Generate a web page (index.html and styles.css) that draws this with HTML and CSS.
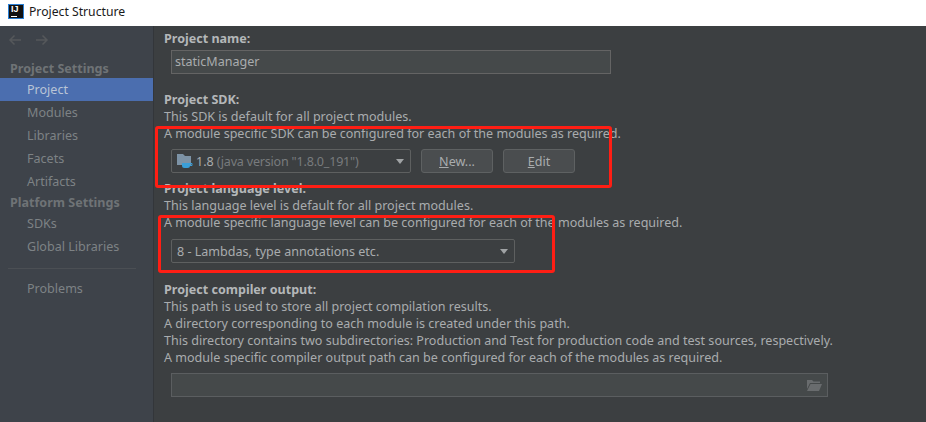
FILE: index.html
```html
<!DOCTYPE html>
<html lang="en">
<head>
<meta charset="utf-8">
<title>Project Structure</title>
<link rel="stylesheet" href="styles.css">
</head>
<body>
<div class="titlebar">
  <div class="logo"><span class="logo-text">IJ</span><span class="logo-bar"></span></div>
  <span class="title">Project Structure</span>
</div>
<div class="window">
  <aside class="sidebar">
    <div class="nav-arrows">
      <svg width="14" height="12" viewBox="0 0 14 12"><path d="M13 6H2M6.500 1.500 2 6l4.500 4.500" fill="none" stroke="#55585b" stroke-width="1.500"/></svg>
      <svg width="14" height="12" viewBox="0 0 14 12"><path d="M1 6h11M7.500 1.500 12 6l-4.500 4.500" fill="none" stroke="#55585b" stroke-width="1.500"/></svg>
    </div>
    <div class="nav-head">Project Settings</div>
    <div class="nav-item active">Project</div>
    <div class="nav-item">Modules</div>
    <div class="nav-item">Libraries</div>
    <div class="nav-item">Facets</div>
    <div class="nav-item">Artifacts</div>
    <div class="nav-head tight">Platform Settings</div>
    <div class="nav-item">SDKs</div>
    <div class="nav-item">Global Libraries</div>
    <div class="nav-sep"></div>
    <div class="nav-item">Problems</div>
  </aside>
  <main class="content">
    <h2 class="label first">Project name:</h2>
    <div class="field name-field">staticManager</div>

    <h2 class="label sdk-label">Project SDK:</h2>
    <p class="line">This SDK is default for all project modules.</p>
    <p class="line">A module specific SDK can be configured for each of the modules as required.</p>
    <div class="row">
      <div class="combo sdk-combo">
        <svg class="sdk-icon" width="17" height="16" viewBox="0 0 17 16"><path d="M0 1h6l2 2h6v9H0z" fill="#7d93a6"/><path d="M5 10h8v2.500a2.500 2.500 0 0 1-2.500 2.500h-3A2.500 2.500 0 0 1 5 12.500z" fill="#3a9fd8"/><path d="M13 10.500h2v2h-2" fill="none" stroke="#3a9fd8"/></svg>
        <span class="combo-value">1.8</span><span class="combo-muted">(java version "1.8.0_191")</span>
        <span class="caret"></span>
      </div>
      <div class="btn"><u>N</u>ew...</div>
      <div class="btn"><u>E</u>dit</div>
    </div>

    <h2 class="label lang-label">Project language level:</h2>
    <p class="line">This language level is default for all project modules.</p>
    <p class="line">A module specific language level can be configured for each of the modules as required.</p>
    <div class="row lang-row">
      <div class="combo lang-combo"><span class="combo-value">8 - Lambdas, type annotations etc.</span><span class="caret"></span></div>
    </div>

    <h2 class="label out-label">Project compiler output:</h2>
    <p class="line">This path is used to store all project compilation results.</p>
    <p class="line">A directory corresponding to each module is created under this path.</p>
    <p class="line">This directory contains two subdirectories: Production and Test for production code and test sources, respectively.</p>
    <p class="line">A module specific compiler output path can be configured for each of the modules as required.</p>
    <div class="field out-field">
      <svg width="15" height="12" viewBox="0 0 15 12"><path d="M0 1h5l1.500 1.500H13V4H3L0 10z" fill="#696c6e"/><path d="M3.500 5H15l-3 7H0z" fill="#696c6e"/></svg>
    </div>
  </main>
</div>
<div class="mark mark-sdk"></div>
<div class="mark mark-lang"></div>
</body>
</html>
```
FILE: styles.css
```css
* { box-sizing: border-box; }
html, body { margin: 0; height: 100%; }
body {
  width: 926px; height: 422px; overflow: hidden; position: relative;
  display: flex; flex-direction: column;
  font: 12.55px/17px "Noto Sans", "Open Sans", sans-serif;
  background: #3c3f41; color: #a9acae;
}
.titlebar {
  height: 26px; flex: none; background: #fff; color: #1a1a1a;
  display: flex; align-items: center; padding: 0 0 3px 8px; gap: 5px;
}
.logo {
  width: 16px; height: 15px; background: #111; border: 1px solid #2a7fd5;
  position: relative; color: #fff;
}
.logo-text { position: absolute; left: 2px; top: 0; font: bold 9px/9px "Liberation Sans", sans-serif; }
.logo-bar { position: absolute; left: 2px; bottom: 1px; width: 6px; height: 1px; background: #fff; }
.title { font-size: 12.2px; }
.window { flex: 1; display: flex; min-height: 0; }
.sidebar {
  width: 154px; flex: none; background: #3e434a; border-right: 1px solid #33363a;
  color: #7d8285;
}
.nav-arrows { height: 32px; display: flex; gap: 13px; padding: 8px 0 0 8px; }
.nav-head { font-weight: 700; color: #6f7376; padding-left: 10px; height: 20px; line-height: 21px; }
.nav-head.tight { height: 19.5px; line-height: 19px; }
.nav-item { height: 22.9px; line-height: 23px; padding-left: 27px; }
.nav-item.active { background: #4b6eaf; color: #b9c4d6; height: 23px; }
.nav-sep { height: 1px; margin: 10px 17px 8px 8px; background: #4b4f54; }
.content { flex: 1; padding: 4px 0 0 10px; min-width: 0; }
.label { margin: 0; font-size: 12.55px; line-height: 17px; font-weight: 700; color: #b4b7b9; }
.sdk-label { margin-top: 17px; }
.lang-label { margin-top: 7px; }
.out-label { margin-top: 18px; }
.line { margin: 0; height: 17px; white-space: nowrap; }
.field {
  margin: 3px 0 0 7px; height: 24px; border: 1px solid #646464; background: #45494a;
  color: #a9acae; padding-left: 3px; line-height: 22px;
}
.name-field { width: 440px; }
.out-field {
  width: 657px; margin-top: 7px; border-color: #5b5e60;
  display: flex; align-items: center; justify-content: flex-end; padding-right: 5px;
}
.row { display: flex; gap: 10px; margin: 7px 0 0 7px; }
.lang-row { margin-top: 8px; }
.combo {
  height: 24px; border: 1px solid #5e6060; border-radius: 2px; background: #3c3f41;
  display: flex; align-items: center; padding-left: 5px; position: relative; color: #a9acae;
}
.sdk-combo { width: 240px; }
.lang-combo { width: 344px; }
.sdk-icon { margin-right: 2px; }
.combo-muted { color: #787b7d; margin-left: 3px; letter-spacing: -0.2px; }
.caret {
  position: absolute; right: 6px; top: 9px; width: 0; height: 0;
  border-left: 4.500px solid transparent; border-right: 4.500px solid transparent; border-top: 5px solid #a0a3a5;
}
.btn {
  width: 72px; height: 24px; border: 1px solid #5e6162; border-radius: 3px; background: #4a4d4f;
  text-align: center; line-height: 23px; color: #a9acae;
}
.mark { position: absolute; border: 3px solid #ff1e14; border-radius: 3px; }
.mark-sdk { left: 155px; top: 126px; width: 457px; height: 62px; }
.mark-lang { left: 158px; top: 215px; width: 397px; height: 58px; }
```
